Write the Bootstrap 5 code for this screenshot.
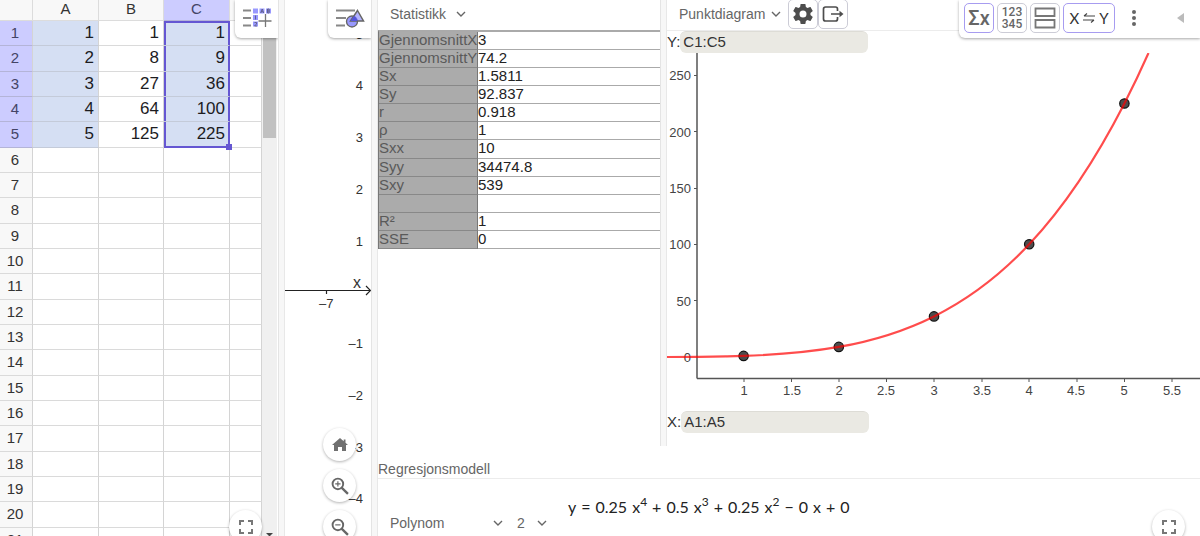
<!DOCTYPE html>
<html lang="nb">
<head>
<meta charset="utf-8">
<meta name="viewport" content="width=device-width, initial-scale=1">
<title>Regresjonsanalyse</title>
<link href="https://cdn.jsdelivr.net/npm/bootstrap@5.3.0/dist/css/bootstrap.min.css" rel="stylesheet">
<style>
  body { font-family: "Liberation Sans", Arial, sans-serif; font-size: 15px; line-height: 18px; color: #333; background: #fff; }
  svg { display: block; }
  .divider { width: 7px; background: #f7f7f7; border-left: 1px solid #e4e4e4; border-right: 1px solid #e8e8e8; }

  /* spreadsheet */
  .sheet-pane { width: 278px; }
  .sheet { table-layout: fixed; width: 262px; height: 553px; border-collapse: separate; border-spacing: 0; }
  .sheet th, .sheet td { border-right: 1px solid #d4d4d4; border-bottom: 1px solid #dadada; padding: 0 4px 0 0; text-align: right; font-size: 17px; line-height: 18px; color: #1c1c1f; }
  .sheet thead tr { height: 21px; }
  .sheet thead th { text-align: center; padding: 0 0 2px; font-size: 15px; font-weight: 400; background: #f8f8f8; color: #333; border-color: #dcdcdc; }
  .sheet tbody th { text-align: center; padding: 0 2px 0 0; font-size: 15px; font-weight: 400; background: #f8f8f8; color: #333; }
  .sheet .head-on, .sheet thead .head-on { background: #ccf; color: #446; border-bottom-color: #b4b4d8; }
  .sheet .cell-on { background: #d5dff3; border-bottom-color: #c4cbd9; }
  .sheet .pick { border-right-color: #6557d2; box-shadow: inset 2px 0 #6557d2, inset -1px 0 #6557d2; }
  .sheet .pick-top { box-shadow: inset 2px 0 #6557d2, inset -1px 0 #6557d2, inset 0 2px #6557d2; }
  .sheet .pick-end { border-bottom-color: #6557d2; position: relative; box-shadow: inset 2px 0 #6557d2, inset -1px 0 #6557d2, inset 0 -1px #6557d2; }
  .pick-end::after { content: ""; position: absolute; right: -3px; bottom: -3px; width: 6px; height: 6px; background: #6557d2; z-index: 1; }
  .scroll-track { width: 15px; background: #f0f0f0; }
  .scroll-thumb { width: 13px; height: 138px; background: #c1c1c1; }
  .scroll-arrow { position: absolute; left: 4px; bottom: 0; }

  /* floating controls */
  .tool-tab { position: absolute; top: 0; right: 0; width: 43px; height: 38px; padding: 0; background: #fff; border: 0; border-radius: 0 0 0 6px; box-shadow: 0 1px 3px rgba(0,0,0,.35); clip-path: inset(0 0 -4px -4px); }
  .round-btn { width: 33px; height: 33px; padding: 0; border: 0; border-radius: 50%; background: #fff; display: flex; align-items: center; justify-content: center; box-shadow: 0 1px 3px rgba(0,0,0,.3); }
  .full-btn { position: absolute; bottom: -7px; z-index: 2; }
  .sheet-pane .full-btn { right: 16px; }
  .model-pane .full-btn { right: 15px; }
  .zoom-stack { position: absolute; right: 15px; bottom: -7px; gap: 8px; }

  .graph-pane { width: 86px; }
  .graph-pane text { font-size: 13px; fill: #333; }
  .graph-pane .axis-name { font-size: 16px; }

  /* statistics */
  .stat-pane { width: 282px; }
  .pane-head { height: 31px; }
  .pick-list { border: 0; border-radius: 0; font-size: 14px; line-height: 18px; color: #666; padding: 0 20px 0 12px; height: 28px; background-color: transparent; background-size: 10px 10px; background-position: right 7px center;
    background-image: url("data:image/svg+xml,%3csvg xmlns='http://www.w3.org/2000/svg' viewBox='0 0 10 10'%3e%3cpath d='M1 3l4 4 4-4' fill='none' stroke='%23666' stroke-width='1.4'/%3e%3c/svg%3e"); }
  .w-stat { width: 95px; }
  .w-plot { width: 121px; }
  .w-model { width: 132px; }
  .w-degree { width: 44px; padding-left: 7px; }
  .degree-picks { padding-top: 30px; }
  .stat-list { table-layout: fixed; width: 100%; height: 219px; border-collapse: separate; border-spacing: 0; border-top: 2px solid #aaa; border-left: 1px solid #777; margin-top: -1px; }
  .stat-list th, .stat-list td { padding: 0; border-bottom: 1px solid #aaa; line-height: 16px; vertical-align: top; white-space: nowrap; color: #222; }
  .stat-list th { width: 99px; background: #ababab; color: #5a5a5a; font-weight: 400; border-right: 1px solid #777; border-bottom-color: #888; }

  /* scatter plot */
  .icon-btn { width: 30px; height: 30px; padding: 0; background: #fff; border: 1px solid #ccccd6; border-radius: 5px; display: flex; align-items: center; justify-content: center; color: #666; margin-top: -1px; }
  .icon-btn.active-tool { border-color: #a79cf0; }
  .range-row { height: 22px; }
  .range-box { width: 188px; height: 22px; padding: 0 3px 2px; border: 0; border-top: 1px solid #dddcd6; border-radius: 6px; background: #eae9e3; font-size: 15px; line-height: 19px; color: #333; }
  .plot { height: 358px; }
  .plot text { font-size: 13px; fill: #444; }
  .plot .y-tick { text-anchor: end; }
  .plot .x-tick { text-anchor: middle; }
  .hair { border-bottom: 1px solid #ececec; }

  .tool-bar { position: absolute; top: 0; right: 0; width: 241px; height: 38px; padding: 3px 0 0 5px; gap: 3px; background: #fff; border-radius: 0 0 0 6px; box-shadow: 0 1px 3px rgba(0,0,0,.35); }
  .tool-bar .icon-btn { margin-top: 0; }
  .tool-bar .swap-btn { width: 52px; gap: 4px; font-family: Lato, sans-serif; font-size: 15px; color: #333; }
  .sum-btn { font: 500 20px Roboto, sans-serif; }
  .num-btn { flex-direction: column; font: 500 12px/12px Roboto, sans-serif; }
  .num-btn span { height: 12px; }
  .plain-btn { border: 0; padding: 0; background: none; height: 30px; }
  .more-btn { margin-left: 13px; }

  /* regression model */
  .model-pane { height: 90px; padding-top: 14px; }
  .model-title { font-size: 14px; color: #666; height: 19px; }
  .formula { font-family: Lato, sans-serif; font-size: 16px; line-height: 20px; gap: 5px; color: #222; margin-left: 14px; padding-top: 18px; }
  .formula sup { font-size: 12px; line-height: 0; top: -7px; }
</style>
</head>
<body>
<main class="d-flex vh-100 overflow-hidden">

  <section class="sheet-pane position-relative d-flex flex-shrink-0 overflow-hidden" aria-label="Regneark">
    <table class="sheet flex-shrink-0">
      <colgroup><col style="width:33px"><col style="width:66px"><col style="width:65px"><col style="width:66px"><col></colgroup>
      <thead><tr><th></th><th>A</th><th>B</th><th class="head-on">C</th><th></th></tr></thead>
      <tbody>
        <tr><th class="head-on">1</th><td class="cell-on">1</td><td>1</td><td class="cell-on pick pick-top">1</td><td></td></tr>
        <tr><th class="head-on">2</th><td class="cell-on">2</td><td>8</td><td class="cell-on pick">9</td><td></td></tr>
        <tr><th class="head-on">3</th><td class="cell-on">3</td><td>27</td><td class="cell-on pick">36</td><td></td></tr>
        <tr><th class="head-on">4</th><td class="cell-on">4</td><td>64</td><td class="cell-on pick">100</td><td></td></tr>
        <tr><th class="head-on">5</th><td class="cell-on">5</td><td>125</td><td class="cell-on pick pick-end">225</td><td></td></tr>
        <tr><th>6</th><td></td><td></td><td></td><td></td></tr>
        <tr><th>7</th><td></td><td></td><td></td><td></td></tr>
        <tr><th>8</th><td></td><td></td><td></td><td></td></tr>
        <tr><th>9</th><td></td><td></td><td></td><td></td></tr>
        <tr><th>10</th><td></td><td></td><td></td><td></td></tr>
        <tr><th>11</th><td></td><td></td><td></td><td></td></tr>
        <tr><th>12</th><td></td><td></td><td></td><td></td></tr>
        <tr><th>13</th><td></td><td></td><td></td><td></td></tr>
        <tr><th>14</th><td></td><td></td><td></td><td></td></tr>
        <tr><th>15</th><td></td><td></td><td></td><td></td></tr>
        <tr><th>16</th><td></td><td></td><td></td><td></td></tr>
        <tr><th>17</th><td></td><td></td><td></td><td></td></tr>
        <tr><th>18</th><td></td><td></td><td></td><td></td></tr>
        <tr><th>19</th><td></td><td></td><td></td><td></td></tr>
        <tr><th>20</th><td></td><td></td><td></td><td></td></tr>
        <tr><th>21</th><td></td><td></td><td></td><td></td></tr>
      </tbody>
    </table>
    <div class="scroll-track position-relative">
      <div class="scroll-thumb ms-auto me-auto"></div>
      <svg class="scroll-arrow" width="7" height="4"><path d="M0 1h7L4 4H3z" fill="#444"/></svg>
    </div>
    <button class="tool-tab" aria-label="Regnearkverktøy">
      <svg width="43" height="38" viewBox="0 0 43 38">
        <path d="M8 10.500h8M8 18h8M8 25.500h8" stroke="#888" stroke-width="2"/>
        <path d="M18 8.500h5v5h-5zM24.500 8.500h5v5h-5zM31 8.500h5v5h-5zM18 15h5v5h-5zM18 21.500h5v5h-5z" fill="#99f"/>
        <path d="M25.700 13l1.500-4 1.500 4M26.200 11.800h2M32.500 9v4h1.600v-4zM32.500 11h2M20.500 15.500v4M19.500 22.500h2v1.500l-2 2h2.500" fill="none" stroke="#557" stroke-width=".8"/>
        <path d="M30.500 14v13M23.500 21h13" stroke="#777" stroke-width="1.300"/>
      </svg>
    </button>
    <button class="round-btn full-btn" aria-label="Fullskjerm">
      <svg width="14" height="14" viewBox="0 0 14 14"><path d="M1 5V1h4M9 1h4v4M13 9v4H9M5 13H1V9" fill="none" stroke="#777" stroke-width="2"/></svg>
    </button>
  </section>

  <div class="divider flex-shrink-0"></div>

  <section class="graph-pane position-relative flex-shrink-0 overflow-hidden" aria-label="Grafikkfelt">
    <svg width="86" height="536">
      <path d="M0 290.500h85M81 286l4.500 4.500L81 295M41.500 291v3" fill="none" stroke="#222" stroke-width="1.200"/>
      <text class="axis-name" x="68" y="288">x</text>
      <text x="34" y="308">–7</text>
      <g text-anchor="end">
        <text x="78" y="39">5</text>
        <text x="78" y="90">4</text>
        <text x="78" y="142">3</text>
        <text x="78" y="194">2</text>
        <text x="78" y="246">1</text>
        <text x="78" y="348">–1</text>
        <text x="78" y="400">–2</text>
        <text x="78" y="452">–3</text>
        <text x="78" y="503">–4</text>
      </g>
    </svg>
    <button class="tool-tab" aria-label="Grafikkverktøy">
      <svg width="43" height="38" viewBox="0 0 43 38">
        <path d="M8 10.500h19M8 18h10M8 25.500h9" stroke="#888" stroke-width="2"/>
        <circle cx="24" cy="21.500" r="5.500" fill="#99f" stroke="#666" stroke-width="1.300"/>
        <path d="M29.500 10.500L35.500 21H22.500z" fill="#99f" fill-opacity=".75" stroke="#666" stroke-width="1.500"/>
        <path d="M22.500 21l3.500-5c2 1 3 2.500 3.500 5z" fill="#55d"/>
      </svg>
    </button>
    <div class="zoom-stack d-flex flex-column">
      <button class="round-btn" aria-label="Standardvisning">
        <svg width="16" height="14" viewBox="0 0 16 14"><path d="M8 0L0 7h2v6h4V9h4v4h4V7h2l-2.500-2.200V1.500h-1.800v1.700z" fill="#707070"/></svg>
      </button>
      <button class="round-btn" aria-label="Forstørr">
        <svg width="18" height="18" viewBox="0 0 17 17" fill="none" stroke="#666"><circle cx="6.500" cy="6.500" r="5" stroke-width="1.800"/><path d="M10 10l6 6" stroke-width="2.200"/><path d="M4 6.500h5M6.500 4v5" stroke-width="1.100"/></svg>
      </button>
      <button class="round-btn" aria-label="Forminsk">
        <svg width="18" height="18" viewBox="0 0 17 17" fill="none" stroke="#666"><circle cx="6.500" cy="6.500" r="5" stroke-width="1.800"/><path d="M10 10l6 6" stroke-width="2.200"/><path d="M4 6.500h5" stroke-width="1.100"/></svg>
      </button>
    </div>
  </section>

  <div class="divider flex-shrink-0"></div>

  <div class="d-flex flex-column flex-grow-1 overflow-hidden position-relative">
    <div class="d-flex flex-grow-1 overflow-hidden">

      <section class="stat-pane flex-shrink-0" aria-label="Statistikk">
        <div class="pane-head">
          <select class="form-select pick-list w-stat" aria-label="Visning"><option>Statistikk</option></select>
        </div>
        <table class="stat-list">
          <tbody>
            <tr><th scope="row">GjennomsnittX</th><td>3</td></tr>
            <tr><th scope="row">GjennomsnittY</th><td>74.2</td></tr>
            <tr><th scope="row">Sx</th><td>1.5811</td></tr>
            <tr><th scope="row">Sy</th><td>92.837</td></tr>
            <tr><th scope="row">r</th><td>0.918</td></tr>
            <tr><th scope="row">ρ</th><td>1</td></tr>
            <tr><th scope="row">Sxx</th><td>10</td></tr>
            <tr><th scope="row">Syy</th><td>34474.8</td></tr>
            <tr><th scope="row">Sxy</th><td>539</td></tr>
            <tr><th scope="row">&nbsp;</th><td></td></tr>
            <tr><th scope="row">R²</th><td>1</td></tr>
            <tr><th scope="row">SSE</th><td>0</td></tr>
          </tbody>
        </table>
      </section>

      <div class="divider flex-shrink-0"></div>

      <section class="flex-grow-1 overflow-hidden" aria-label="Punktdiagram">
        <div class="pane-head hair d-flex">
          <select class="form-select pick-list w-plot flex-shrink-0" aria-label="Diagramtype"><option>Punktdiagram</option></select>
          <button class="icon-btn" aria-label="Innstillinger">
            <svg width="20" height="20" viewBox="2 2 20 20"><path fill="#4d4d4d" d="M19.430 12.980c.04-.32.07-.64.07-.98s-.03-.66-.07-.98l2.110-1.650c.19-.15.24-.42.12-.64l-2-3.460c-.12-.22-.39-.3-.61-.22l-2.490 1c-.52-.4-1.080-.73-1.690-.98l-.38-2.650C14.460 2.180 14.250 2 14 2h-4c-.25 0-.46.18-.49.42l-.38 2.650c-.61.25-1.170.59-1.690.98l-2.490-1c-.23-.09-.49 0-.61.22l-2 3.460c-.13.22-.07.49.12.64l2.110 1.650c-.04.32-.07.65-.07.98s.03.66.07.98l-2.110 1.650c-.19.15-.24.42-.12.64l2 3.460c.12.22.39.3.61.22l2.490-1c.52.4 1.080.73 1.690.98l.38 2.650c.03.24.24.42.49.42h4c.25 0 .46-.18.49-.42l.38-2.650c.61-.25 1.170-.59 1.690-.98l2.490 1c.23.09.49 0 .61-.22l2-3.460c.12-.22.07-.49-.12-.64zM12 15.500a3.500 3.500 0 1 1 0-7 3.500 3.500 0 0 1 0 7z"/></svg>
          </button>
          <button class="icon-btn" aria-label="Eksporter">
            <svg width="22" height="16" viewBox="0 0 22 16" fill="none" stroke="#4d4d4d" stroke-width="1.700"><path d="M15.500 5V3a2 2 0 0 0-2-2h-10a2 2 0 0 0-2 2v10a2 2 0 0 0 2 2h10a2 2 0 0 0 2-2v-2M9 8h10"/><path d="M17.500 4.800L21.500 8l-4 3.200z" fill="#4d4d4d" stroke="none"/></svg>
          </button>
        </div>
        <div class="range-row d-flex align-items-center">
          <label for="yRange">Y:</label><input id="yRange" class="range-box" type="text" value="C1:C5">
        </div>
        <svg class="plot w-100" role="img" aria-label="Punktdiagram med regresjonskurve">
          <g stroke="#555" stroke-width="1.500">
            <path d="M30 0v325.500"/>
            <line x1="30" y1="325.500" x2="100%" y2="325.500"/>
            <path stroke-width="1" d="M27 22.500h3M27 78.500h3M27 135.500h3M27 191.500h3M27 247.500h3M77 326v3M124.500 326v3M172 326v3M219.500 326v3M267 326v3M315 326v3M362 326v3M410 326v3M457.500 326v3M505 326v3"/>
          </g>
          <g class="y-tick">
            <text x="24" y="27">250</text>
            <text x="24" y="84">200</text>
            <text x="24" y="140">150</text>
            <text x="24" y="196">100</text>
            <text x="24" y="253">50</text>
            <text x="24" y="309">0</text>
          </g>
          <g class="x-tick">
            <text x="77" y="342">1</text>
            <text x="125" y="342">1.5</text>
            <text x="172" y="342">2</text>
            <text x="219" y="342">2.5</text>
            <text x="267" y="342">3</text>
            <text x="315" y="342">3.5</text>
            <text x="362" y="342">4</text>
            <text x="409" y="342">4.5</text>
            <text x="457" y="342">5</text>
            <text x="505" y="342">5.5</text>
          </g>
          <g fill="#4d4d4d" stroke="#111" stroke-width="1.200">
            <circle cx="76.600" cy="302.900" r="4.700"/>
            <circle cx="171.800" cy="293.900" r="4.700"/>
            <circle cx="267" cy="263.400" r="4.700"/>
            <circle cx="362.200" cy="191.300" r="4.700"/>
            <circle cx="457.400" cy="50.500" r="4.700"/>
          </g>
          <path fill="none" stroke="red" stroke-opacity=".7" stroke-width="2.200" d="M0 304C25.400 304 51.200 303.800 76.600 302.900C108.300 301.800 140.100 299.500 171.800 293.900C203.500 288.300 235.300 279.200 267 263.400C298.700 247.600 330.500 225.100 362.200 191.300C393.900 157.500 425.700 112.500 457.400 50.500C465.200 35.200 473.100 18.900 481.500 0"/>
        </svg>
        <div class="range-row d-flex align-items-center">
          <label for="xRange">X:</label><input id="xRange" class="range-box" type="text" value="A1:A5">
        </div>
      </section>
    </div>

    <section class="model-pane flex-shrink-0" aria-label="Regresjonsmodell">
      <div class="model-title hair">Regresjonsmodell</div>
      <div class="d-flex">
        <div class="d-flex degree-picks">
          <select class="form-select pick-list w-model" aria-label="Modell"><option>Polynom</option></select>
          <select class="form-select pick-list w-degree" aria-label="Grad"><option>2</option></select>
        </div>
        <div class="formula d-flex text-nowrap">
          <span>y</span><span>=</span><span>0.25</span><span>x<sup>4</sup></span><span>+</span><span>0.5</span><span>x<sup>3</sup></span><span>+</span><span>0.25</span><span>x<sup>2</sup></span><span>−</span><span>0</span><span>x</span><span>+</span><span>0</span>
        </div>
      </div>
      <button class="round-btn full-btn" aria-label="Fullskjerm">
        <svg width="14" height="14" viewBox="0 0 14 14"><path d="M1 5V1h4M9 1h4v4M13 9v4H9M5 13H1V9" fill="none" stroke="#777" stroke-width="2"/></svg>
      </button>
    </section>

    <nav class="tool-bar d-flex" aria-label="Verktøy">
      <button class="icon-btn active-tool sum-btn">Σx</button>
      <button class="icon-btn num-btn"><span>123</span><span>345</span></button>
      <button class="icon-btn" aria-label="Del visning">
        <svg width="22" height="22" viewBox="0 0 22 22"><path d="M1.500 1.500h19v7.500h-19zM1.500 13h19v7.500h-19z" fill="none" stroke="#777" stroke-width="1.800"/></svg>
      </button>
      <button class="icon-btn active-tool swap-btn"><span>X</span>
        <svg width="12" height="10" viewBox="0 0 12 10"><path d="M12 3H1M4 .5L1 3M0 7h11M8 9.500L11 7" fill="none" stroke="#444" stroke-width="1.100"/></svg>
        <span>Y</span></button>
      <button class="plain-btn more-btn" aria-label="Flere valg"><svg width="6" height="16"><circle cx="3" cy="2" r="2" fill="#666"/><circle cx="3" cy="8" r="2" fill="#666"/><circle cx="3" cy="14" r="2" fill="#666"/></svg></button>
      <button class="plain-btn ms-auto me-3" aria-label="Skjul"><svg width="7" height="12"><path d="M7 1v10L0 6z" fill="#bbb"/></svg></button>
    </nav>
  </div>
</main>
<script src="https://cdn.jsdelivr.net/npm/bootstrap@5.3.0/dist/js/bootstrap.bundle.min.js"></script>
</body>
</html>
